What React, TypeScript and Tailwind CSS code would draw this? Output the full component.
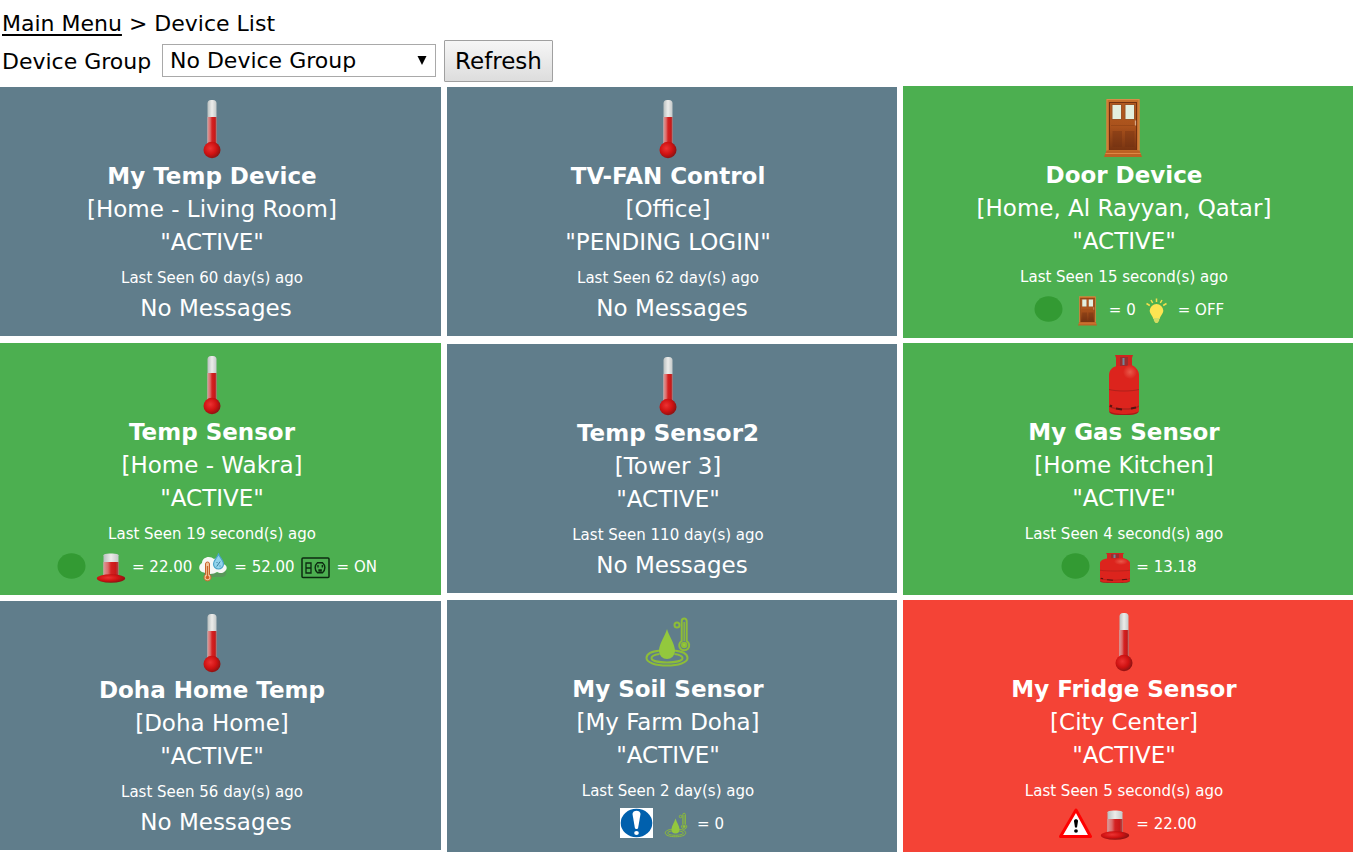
import { useState } from 'react';
import type { ReactNode } from 'react';
import { clsx } from 'clsx';

type IconName = 'thermometer' | 'door' | 'gas' | 'soil' | 'bulb' | 'humidity' | 'outlet';
type Status = 'ok' | 'info' | 'alert';

interface Reading {
    icon: IconName;
    value: string;
}

interface Device {
    name: string;
    location: string;
    state: string;
    lastSeen: string;
    icon: IconName;
    tone: 'idle' | 'online' | 'alarm';
    status?: Status;
    readings?: Reading[];
}

const groups = ['No Device Group', 'Home', 'Office'];

const devices: Device[] = [
    { name: 'My Temp Device', location: 'Home - Living Room', state: 'ACTIVE', lastSeen: '60 day(s)', icon: 'thermometer', tone: 'idle' },
    { name: 'TV-FAN Control', location: 'Office', state: 'PENDING LOGIN', lastSeen: '62 day(s)', icon: 'thermometer', tone: 'idle' },
    {
        name: 'Door Device', location: 'Home, Al Rayyan, Qatar', state: 'ACTIVE', lastSeen: '15 second(s)', icon: 'door', tone: 'online',
        status: 'ok', readings: [{ icon: 'door', value: '0' }, { icon: 'bulb', value: 'OFF' }],
    },
    {
        name: 'Temp Sensor', location: 'Home - Wakra', state: 'ACTIVE', lastSeen: '19 second(s)', icon: 'thermometer', tone: 'online',
        status: 'ok', readings: [{ icon: 'thermometer', value: '22.00' }, { icon: 'humidity', value: '52.00' }, { icon: 'outlet', value: 'ON' }],
    },
    { name: 'Temp Sensor2', location: 'Tower 3', state: 'ACTIVE', lastSeen: '110 day(s)', icon: 'thermometer', tone: 'idle' },
    {
        name: 'My Gas Sensor', location: 'Home Kitchen', state: 'ACTIVE', lastSeen: '4 second(s)', icon: 'gas', tone: 'online',
        status: 'ok', readings: [{ icon: 'gas', value: '13.18' }],
    },
    { name: 'Doha Home Temp', location: 'Doha Home', state: 'ACTIVE', lastSeen: '56 day(s)', icon: 'thermometer', tone: 'idle' },
    {
        name: 'My Soil Sensor', location: 'My Farm Doha', state: 'ACTIVE', lastSeen: '2 day(s)', icon: 'soil', tone: 'idle',
        status: 'info', readings: [{ icon: 'soil', value: '0' }],
    },
    {
        name: 'My Fridge Sensor', location: 'City Center', state: 'ACTIVE', lastSeen: '5 second(s)', icon: 'thermometer', tone: 'alarm',
        status: 'alert', readings: [{ icon: 'thermometer', value: '22.00' }],
    },
];

// Each drawing keeps its own viewBox; "stretch" ones fill the small square slot
const art: Record<IconName, { box: string; large: string; stretch?: boolean; body: ReactNode }> = {
    thermometer: {
        box: '0 0 18 60',
        large: 'w-[18px] h-[60px]',
        stretch: true,
        body: (
            <>
                <rect x="4.5" y="1" width="9" height="46" rx="3.5" fill="url(#glass)" />
                <rect x="4.5" y="18" width="9" height="30" fill="url(#mercury)" />
                <ellipse cx="9" cy="51" rx="8.5" ry="8.3" fill="url(#ball)" />
            </>
        ),
    },
    door: {
        box: '0 0 40 60',
        large: 'w-[40px] h-[60px]',
        body: (
            <>
                <rect x="2.5" y="1" width="33" height="53" fill="#c56f2b" />
                <rect x="3" y="1.5" width="32" height="52" fill="none" stroke="#d98d48" strokeWidth="1" />
                <rect x="5" y="4" width="28" height="48" fill="#713010" />
                <rect x="6" y="5" width="26" height="47" fill="url(#wood)" />
                <rect x="7.5" y="6" width="10.5" height="16" fill="#9a5426" />
                <rect x="20.5" y="6" width="10.5" height="16" fill="#9a5426" />
                <rect x="8.5" y="7" width="8.5" height="14" fill="#e3efdf" />
                <rect x="21.5" y="7" width="8.5" height="14" fill="#e3efdf" />
                <path d="M7 27.5h24" stroke="#944616" strokeWidth="0.8" />
                <rect x="8.5" y="33" width="9.5" height="16" fill="#6d2f10" opacity="0.35" />
                <rect x="21" y="33" width="9.5" height="16" fill="#6d2f10" opacity="0.35" />
                <path d="M31.5 22.5v5" stroke="#d9a982" strokeWidth="1.3" />
                <path d="M2.5 52.5h33l2.500 6.500H0z" fill="#bd6123" />
                <path d="M1.500 55.500h35" stroke="#df8844" strokeWidth="1" />
            </>
        ),
    },
    gas: {
        box: '0 0 30 60',
        large: 'w-[30px] h-[60px]',
        stretch: true,
        body: (
            <>
                <path d="M6 0h18l-1 3v11H7V3z" fill="#cf2620" />
                <path d="M11 2h8v9h-8z" fill="#9a2e2e" />
                <path d="M14.500 3v7" stroke="#73899a" strokeWidth="2" />
                <path d="M0 20C0 15 4 11 9 11h12c5 0 9 4 9 9v35c0 3-4 5-15 5S0 58 0 55z" fill="#dc241d" />
                <circle cx="21" cy="17" r="7" fill="url(#shine)" />
                <path d="M0 34.5c8 2 22 2 30 0" fill="none" stroke="#ae211b" strokeWidth="1" />
                <path d="M0 51c6 4 24 4 30 0" fill="none" stroke="#ae211b" strokeWidth="1.5" />
                <path d="M7 53.5l6 1M22 53.500l5-1M1 50.500l2 1" stroke="#571411" strokeWidth="2" />
                <path d="M0 56c4 4 26 4 30 0-1 4-8 4-15 4S0 60 0 56z" fill="#a51c18" />
            </>
        ),
    },
    soil: {
        box: '0 0 60 60',
        large: 'w-[60px] h-[60px]',
        body: (
            <g fill="none" stroke="#8dbd38" strokeWidth="2">
                <path d="M22 38.500c-8 .8-13.500 3.500-13.500 7.500 0 4.500 9 7.500 20.500 7.500s20.500-3 20.500-7.500c0-4-5.500-6.700-13.500-7.500" />
                <path d="M21.500 42c-5 .8-8 2.200-8 4 0 2.800 7 4.500 15.500 4.500s15.500-1.700 15.500-4.500c0-1.800-3-3.200-8-4" />
                <path d="M29 17c2 7 8 15 8 22a8 8 0 0 1-16 0c0-7 6-15 8-22z" fill="#93c83d" stroke="none" />
                <path d="M43.700 29V9a2.500 2.500 0 0 1 5 0v20a5 5 0 1 1-5 0z" />
                <path d="M46.200 10v19" strokeWidth="1.400" />
                <circle cx="46.200" cy="33" r="2.200" fill="#93c83d" />
                <circle cx="39" cy="13" r="2.500" />
            </g>
        ),
    },
    bulb: {
        box: '0 0 30 30',
        large: 'w-[60px] h-[60px]',
        body: (
            <>
                <path d="M14.500 8a6.800 6.800 0 0 0-6.800 6.500c0 3.500 3 5 3.600 8.500h6.400c.6-3.500 3.600-5 3.600-8.500A6.800 6.800 0 0 0 14.500 8z" fill="#fde452" />
                <path d="M11.500 22h6l-.5 3-1.500 2h-2l-1.500-2z" fill="#d3dc62" />
                <path d="M14.500 2.500V6M9 4l1.700 3M20 4l-1.700 3M4.500 7.500l3.300 2M24.500 7.500l-3.300 2" stroke="#f3e04e" strokeWidth="1.500" />
            </>
        ),
    },
    humidity: {
        box: '0 0 30 30',
        large: 'w-[60px] h-[60px]',
        body: (
            <>
                <path d="M5 20h19l4-2c1 3-1 6-4 6H8z" fill="#5f8d60" opacity="0.7" />
                <path d="M6 19.500C0 19 0 12 4 10c0-6 8-8 12-4 4-2 8 1 8 5 5 0 6 5 3 7-2 3-6 2-8 1-3 2-8 3-13 .5z" fill="#f7f8f6" />
                <path d="M20.500 1c1.500 4 5 6.500 5 10a5 5 0 0 1-10 0c0-3.500 3.500-6 5-10z" fill="#91d3ec" stroke="#4ba4c9" strokeWidth="1.200" />
                <path d="M22.200 8.500l-3.500 5M19 9v1M22 12.500v1" stroke="#3c7f9d" strokeWidth="1" />
                <path d="M7.500 21.500V11a2 2 0 0 1 4 0v10.500a3.500 3.500 0 1 1-4 0z" fill="#f4c398" stroke="#c8642b" strokeWidth="1" />
                <path d="M9.500 13v11" stroke="#c8642b" strokeWidth="1.300" />
                <circle cx="9.500" cy="24.500" r="1.800" fill="#d35f24" />
            </>
        ),
    },
    outlet: {
        box: '0 0 30 30',
        large: 'w-[60px] h-[60px]',
        body: (
            <g fill="none" stroke="#0c2b10" strokeWidth="1.500">
                <rect x="1" y="5" width="27" height="19.500" rx="1" />
                <path d="M5 10h5v10H5zM5 15h5" strokeWidth="1.300" />
                <path d="M16.500 9.800h5a6.500 6.500 0 0 1 0 10h-5a6.500 6.500 0 0 1 0-10z" strokeWidth="1.400" />
                <path d="M17 12v2.500M21.300 12v2.500M18 18v-1.200h2.200V18z" strokeWidth="1.300" />
            </g>
        ),
    },
};

function Icon({ name, large }: { name: IconName; large?: boolean }) {
    const { box, large: largeSize, stretch, body } = art[name];
    return (
        <svg
            viewBox={box}
            preserveAspectRatio={stretch && !large ? 'none' : 'xMidYMid meet'}
            className={clsx('shrink-0', large ? largeSize : 'w-[30px] h-[30px]')}
            aria-hidden="true"
        >
            {body}
        </svg>
    );
}

function StatusIcon({ status }: { status: Status }) {
    return (
        <svg viewBox="0 0 33 30" className="w-[33px] h-[30px] mb-0.5 mr-0.5 shrink-0" aria-hidden="true">
            {status === 'ok' && <ellipse cx="16.500" cy="15" rx="14" ry="12.800" fill="#339a33" />}
            {status === 'info' && (
                <>
                    <rect width="33" height="30" fill="#fff" />
                    <ellipse cx="16.500" cy="15" rx="15.800" ry="14.300" fill="#0060ad" />
                    <path d="M12.500 6c0-4.500 8-4.500 8 0l-2.300 13.500c-.4 2-3 2-3.400 0z" fill="#fff" />
                    <ellipse cx="16.500" cy="25" rx="2.300" ry="2.100" fill="#fff" />
                </>
            )}
            {status === 'alert' && (
                <>
                    <path d="M17 2L31.500 28.500H1.500z" fill="#fff" stroke="#f00" strokeWidth="3" strokeLinejoin="round" />
                    <path d="M15 13c0-2.500 4-2.500 4 0l-1 6.500h-2z" fill="#000" />
                    <ellipse cx="17" cy="23" rx="1.900" ry="1.700" fill="#000" />
                </>
            )}
        </svg>
    );
}

// Gradients shared by the device drawings
function Gradients() {
    return (
        <svg className="absolute w-0 h-0" aria-hidden="true">
            <defs>
                <linearGradient id="glass">
                    <stop offset="0" stopColor="#b9c0c0" />
                    <stop offset="0.5" stopColor="#ececea" />
                    <stop offset="1" stopColor="#c3c8c8" />
                </linearGradient>
                <linearGradient id="mercury">
                    <stop offset="0" stopColor="#d99b9b" />
                    <stop offset="0.3" stopColor="#dc6a68" />
                    <stop offset="0.5" stopColor="#d42222" />
                    <stop offset="0.8" stopColor="#c91a1a" />
                    <stop offset="1" stopColor="#a84a4a" />
                </linearGradient>
                <radialGradient id="ball" cx="0.4" cy="0.4" r="0.6">
                    <stop offset="0" stopColor="#ec3232" />
                    <stop offset="0.6" stopColor="#d01212" />
                    <stop offset="1" stopColor="#8f1313" />
                </radialGradient>
                <linearGradient id="wood" x1="0" y1="0" x2="0" y2="1">
                    <stop offset="0" stopColor="#b35a1f" />
                    <stop offset="0.5" stopColor="#aa521c" />
                    <stop offset="1" stopColor="#783411" />
                </linearGradient>
                <radialGradient id="shine">
                    <stop offset="0" stopColor="#e9594a" />
                    <stop offset="1" stopColor="#dc241d" />
                </radialGradient>
            </defs>
        </svg>
    );
}

function DeviceCard({ device }: { device: Device }) {
    return (
        <article
            className={clsx(
                'py-3 text-center text-white',
                device.tone === 'idle' && 'bg-[#607d8b]',
                device.tone === 'online' && 'bg-[#4caf50]',
                device.tone === 'alarm' && 'bg-[#f44336]',
                !device.readings && 'mt-px'
            )}
        >
            <div className="pr-2">
                <div className="mb-px flex justify-center">
                    <Icon name={device.icon} large />
                </div>
                <h2 className="font-bold">{device.name}</h2>
                <p>[{device.location}]</p>
                <p>"{device.state}"</p>
                <p className="h-[33px]"><span className="text-[15px]">Last Seen {device.lastSeen} ago</span></p>
            </div>
            {device.readings ? (
                <div className="flex h-[35px] items-end justify-center gap-1.5 text-[15px] leading-8">
                    {device.status && <StatusIcon status={device.status} />}
                    {device.readings.map((reading) => (
                        <div key={reading.icon} className="flex items-end gap-1.5">
                            <Icon name={reading.icon} />
                            <span>= {reading.value}</span>
                        </div>
                    ))}
                </div>
            ) : (
                <p className="h-8">No Messages</p>
            )}
        </article>
    );
}

function App() {
    const [group, setGroup] = useState(groups[0]);

    return (
        <div className="overflow-x-hidden bg-white text-[23px] leading-[33px] text-black font-['DejaVu_Sans',Verdana,sans-serif]">
            <Gradients />
            <header className="px-0.5 pt-2">
                <nav className="text-[22px] leading-8">
                    <a href="#menu" className="underline decoration-2 underline-offset-3">Main Menu</a> &gt; Device List
                </nav>
                <div className="flex items-center gap-2">
                    <label htmlFor="group" className="min-w-[152px] text-[22px]">Device Group</label>
                    <div className="relative mb-px flex">
                        <select
                            id="group"
                            value={group}
                            onChange={(e) => setGroup(e.target.value)}
                            className="h-[33px] w-[274px] appearance-none border border-[#a9a9a9] bg-white pl-[7px] text-[22px] leading-[31px]"
                        >
                            {groups.map((name) => (
                                <option key={name}>{name}</option>
                            ))}
                        </select>
                        <svg viewBox="0 0 10 9" className="pointer-events-none absolute right-[9px] top-3 h-[9px] w-[10px]" aria-hidden="true">
                            <path d="M0.500 0h9L5 9z" fill="#000" />
                        </svg>
                    </div>
                    <button
                        type="button"
                        className="h-[42px] w-[109px] rounded-[1px] border border-[#a0a0a0] bg-linear-to-b from-[#f6f6f6] to-[#dddddd] text-center"
                    >
                        Refresh
                    </button>
                </div>
            </header>
            <main className="-ml-[9px] mr-2 mt-1 grid grid-cols-3 items-start gap-x-1.5 gap-y-[5px]">
                {devices.map((device) => (
                    <DeviceCard key={device.name} device={device} />
                ))}
            </main>
        </div>
    );
}

export default App;
